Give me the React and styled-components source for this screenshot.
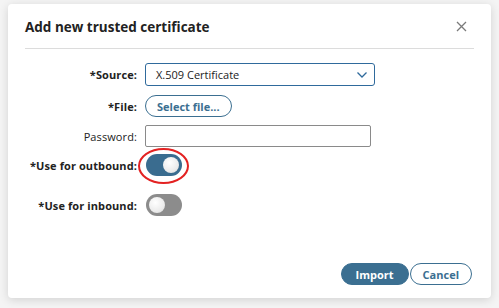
import React from 'react';
import styled, { createGlobalStyle } from 'styled-components';

const GlobalStyle = createGlobalStyle`
  html, body {
    margin: 0;
    padding: 0;
    background: #f4f4f4;
    font-family: "Open Sans", "Liberation Sans", sans-serif;
  }
`;

const Page = styled.div`
  padding: 4px 8px 10px 8px;
`;

const Modal = styled.div`
  width: 483px;
  height: 294px;
  box-sizing: border-box;
  background: #fff;
  border-radius: 4px;
  box-shadow: 0 2px 10px rgba(0, 0, 0, 0.14);
  display: flex;
  flex-direction: column;
`;

const Header = styled.div`
  margin: 0 17px;
  height: 44px;
  border-bottom: 1px solid #dcdcdc;
  display: flex;
  align-items: center;
  justify-content: space-between;
`;

const Title = styled.h2`
  margin: 0;
  padding-top: 2px;
  font-size: 13.5px;
  font-weight: 700;
  color: #222;
`;

const Close = styled.button`
  border: none;
  background: none;
  padding: 0;
  width: 14px;
  height: 14px;
  margin-right: 4px;
  margin-top: 4px;
  cursor: pointer;
  display: flex;
`;

const Form = styled.div`
  display: grid;
  grid-template-columns: 120px auto;
  column-gap: 8px;
  align-items: center;
  padding: 14px 0 0 9px;
`;

const Label = styled.label`
  text-align: right;
  white-space: nowrap;
  font-size: 11px;
  color: #222;
  font-weight: ${p => (p.$required ? 700 : 400)};
  letter-spacing: 0.1px;
  margin-top: ${p => p.$mt || 0}px;
`;

const Field = styled.div`
  display: flex;
  margin-top: ${p => p.$mt || 0}px;
`;

const Select = styled.div`
  width: 230px;
  height: 23px;
  box-sizing: border-box;
  border: 1px solid #2f6a9c;
  border-radius: 3px;
  display: flex;
  align-items: center;
  justify-content: space-between;
  padding: 0 6px 0 10px;
  font-size: 11px;
  color: #222;
`;

const PillButton = styled.button`
  height: 22px;
  box-sizing: border-box;
  border-radius: 11px;
  padding: 0 ${p => p.$px || 12}px;
  font-family: inherit;
  font-size: 11px;
  font-weight: 700;
  border: 1px solid #3b6f91;
  background: ${p => (p.$primary ? '#3b6f91' : '#fff')};
  color: ${p => (p.$primary ? '#fff' : '#3b6f91')};
  cursor: pointer;
`;

const Input = styled.input`
  width: 226px;
  height: 22px;
  box-sizing: border-box;
  border: 1px solid #8a8a8a;
  border-radius: 2px;
  font-family: inherit;
`;

const ToggleWrap = styled.div`
  position: relative;
  display: flex;
  padding-left: 1px;
`;

const Toggle = styled.div`
  width: 36px;
  height: 22px;
  border-radius: 11px;
  background: ${p => (p.$on ? '#3a6c8f' : '#8c8c8c')};
  display: flex;
  align-items: center;
  justify-content: ${p => (p.$on ? 'flex-end' : 'flex-start')};
  padding: 0 3px;
  box-sizing: border-box;
`;

const Knob = styled.div`
  width: 16px;
  height: 16px;
  border-radius: 50%;
  background: radial-gradient(circle at 40% 35%, #ffffff 0%, #ececec 60%, #d8d8d8 100%);
`;

const Highlight = styled.div`
  position: absolute;
  left: -7px;
  top: -6px;
  width: 47px;
  height: 32px;
  border: 2px solid #e32222;
  border-radius: 50%;
  pointer-events: none;
`;

const Footer = styled.div`
  margin-top: auto;
  display: flex;
  justify-content: flex-end;
  gap: 1px;
  padding: 0 19px 13px 0;
`;

export default function App() {
  return (
    <>
      <GlobalStyle />
      <Page>
        <Modal>
          <Header>
            <Title>Add new trusted certificate</Title>
            <Close aria-label="Close">
              <svg width="11" height="11" viewBox="0 0 11 11">
                <path d="M1 1L10 10M10 1L1 10" stroke="#7a7a7a" strokeWidth="1.3" />
              </svg>
            </Close>
          </Header>
          <Form>
            <Label $required>*Source:</Label>
            <Field>
              <Select>
                <span>X.509 Certificate</span>
                <svg width="12" height="8" viewBox="0 0 12 8">
                  <path d="M1.5 1.5L6 6L10.5 1.5" fill="none" stroke="#2f6a9c" strokeWidth="1.3" />
                </svg>
              </Select>
            </Field>

            <Label $required $mt={9}>*File:</Label>
            <Field $mt={9}>
              <PillButton $px={11}>Select file...</PillButton>
            </Field>

            <Label $mt={8}>Password:</Label>
            <Field $mt={8}>
              <Input type="password" />
            </Field>

            <Label $required $mt={7}>*Use for outbound:</Label>
            <Field $mt={7}>
              <ToggleWrap>
                <Toggle $on>
                  <Knob />
                </Toggle>
                <Highlight />
              </ToggleWrap>
            </Field>

            <Label $required $mt={18}>*Use for inbound:</Label>
            <Field $mt={18}>
              <ToggleWrap>
                <Toggle>
                  <Knob />
                </Toggle>
              </ToggleWrap>
            </Field>
          </Form>
          <Footer>
            <PillButton $primary $px={14}>Import</PillButton>
            <PillButton $px={12}>Cancel</PillButton>
          </Footer>
        </Modal>
      </Page>
    </>
  );
}
